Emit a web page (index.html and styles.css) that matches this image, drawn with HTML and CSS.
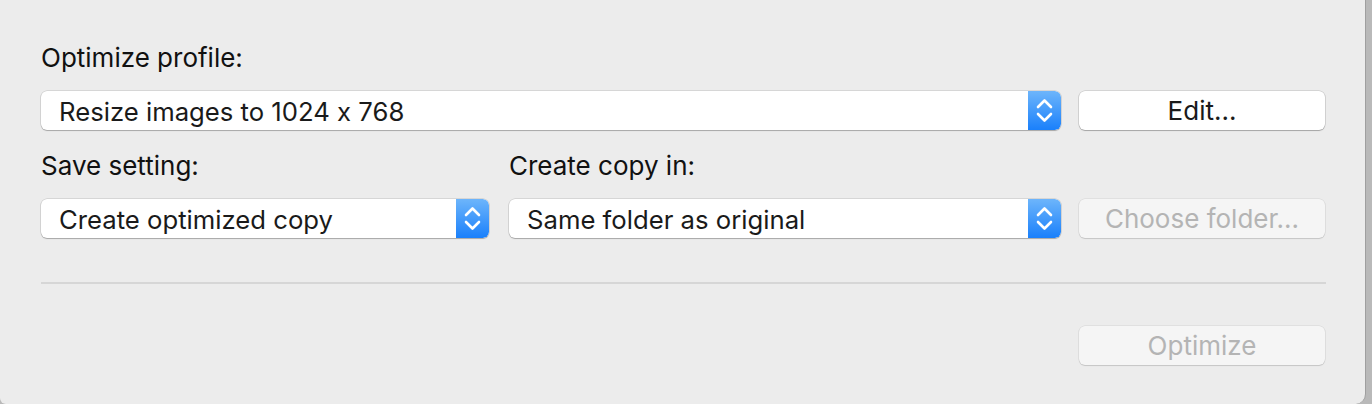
FILE: index.html
```html
<!DOCTYPE html>
<html>
<head>
<meta charset="utf-8">
<link rel="stylesheet" href="styles.css">
</head>
<body>
<div class="window">
  <div class="content">
    <div class="label first">Optimize profile:</div>
    <div class="row">
      <div class="popup wide">
        <span class="popup-text">Resize images to 1024 x 768</span>
        <span class="stepper"><svg viewBox="0 0 33 39" width="33" height="39"><path d="M10 16 L16.5 9.5 L23 16" /><path d="M10 23 L16.5 29.5 L23 23" /></svg></span>
      </div>
      <div class="button">Edit...</div>
    </div>
    <div class="row labels">
      <div class="label col-a">Save setting:</div>
      <div class="label col-b">Create copy in:</div>
    </div>
    <div class="row">
      <div class="popup col-a gapfix">
        <span class="popup-text">Create optimized copy</span>
        <span class="stepper"><svg viewBox="0 0 33 39" width="33" height="39"><path d="M10 16 L16.5 9.5 L23 16" /><path d="M10 23 L16.5 29.5 L23 23" /></svg></span>
      </div>
      <div class="popup col-b">
        <span class="popup-text">Same folder as original</span>
        <span class="stepper"><svg viewBox="0 0 33 39" width="33" height="39"><path d="M10 16 L16.5 9.5 L23 16" /><path d="M10 23 L16.5 29.5 L23 23" /></svg></span>
      </div>
      <div class="button disabled">Choose folder...</div>
    </div>
    <div class="separator"></div>
    <div class="row end">
      <div class="button disabled">Optimize</div>
    </div>
  </div>
</div>
</body>
</html>
```
FILE: styles.css
```css
html, body {
  margin: 0;
  padding: 0;
  background: #b9b9b9;
  height: 404px;
  overflow: hidden;
}
.window {
  width: 1365px;
  height: 404px;
  background: #ececec;
  border-right: 1px solid #9f9f9f;
  border-bottom-right-radius: 10px;
  border-bottom-left-radius: 6px;
  font-family: "Inter", "Liberation Sans", sans-serif;
  font-feature-settings: "calt" 0;
  color: #1c1c1c;
}
.content {
  padding: 44px 0 0 41px;
  width: 1285px;
}
.label {
  font-size: 26px;
  line-height: 28px;
  color: #111;
}
.row {
  display: flex;
  gap: 18px;
  margin-top: 19px;
}
.row.labels {
  margin-top: 22px;
  gap: 20px;
}
.row.labels + .row {
  margin-top: 19px;
}
.col-a { width: 448px; flex: none; }
.col-b { width: 552px; flex: none; }
.gapfix { margin-right: 2px; }
.popup {
  height: 39px;
  box-sizing: border-box;
  background: #fff;
  border-radius: 6px;
  box-shadow: 0 0 0 0.5px rgba(0,0,0,0.18), 0 1px 1px rgba(0,0,0,0.22);
  display: flex;
  align-items: center;
  justify-content: space-between;
  overflow: hidden;
}
.popup.wide { width: 1020px; flex: none; }
.popup-text {
  font-size: 25.7px;
  padding-left: 18px;
  padding-top: 2px;
  color: #1a1a1a;
}
.stepper {
  width: 33px;
  height: 39px;
  background: linear-gradient(#6db5fb, #1a80fb);
  display: flex;
  align-items: center;
  justify-content: center;
  border-radius: 0 6px 6px 0;
}
.stepper svg {
  display: block;
}
.stepper path {
  fill: none;
  stroke: #fff;
  stroke-width: 2.6;
  stroke-linecap: round;
  stroke-linejoin: round;
}
.button {
  width: 246px;
  height: 39px;
  flex: none;
  box-sizing: border-box;
  background: #fff;
  border-radius: 6px;
  box-shadow: 0 0 0 0.5px rgba(0,0,0,0.2), 0 1px 1px rgba(0,0,0,0.22);
  display: flex;
  align-items: center;
  justify-content: center;
  font-size: 26px;
  color: #1a1a1a;
}
.button.disabled {
  background: #f5f5f5;
  color: #b4b4b4;
  box-shadow: 0 0 0 0.5px rgba(0,0,0,0.1), 0 1px 1px rgba(0,0,0,0.12);
}
.separator {
  height: 2px;
  background: #d6d6d6;
  margin-top: 44px;
  width: 1285px;
}
.row.end {
  justify-content: flex-end;
  margin-top: 42px;
  padding-right: 1px;
}
```
